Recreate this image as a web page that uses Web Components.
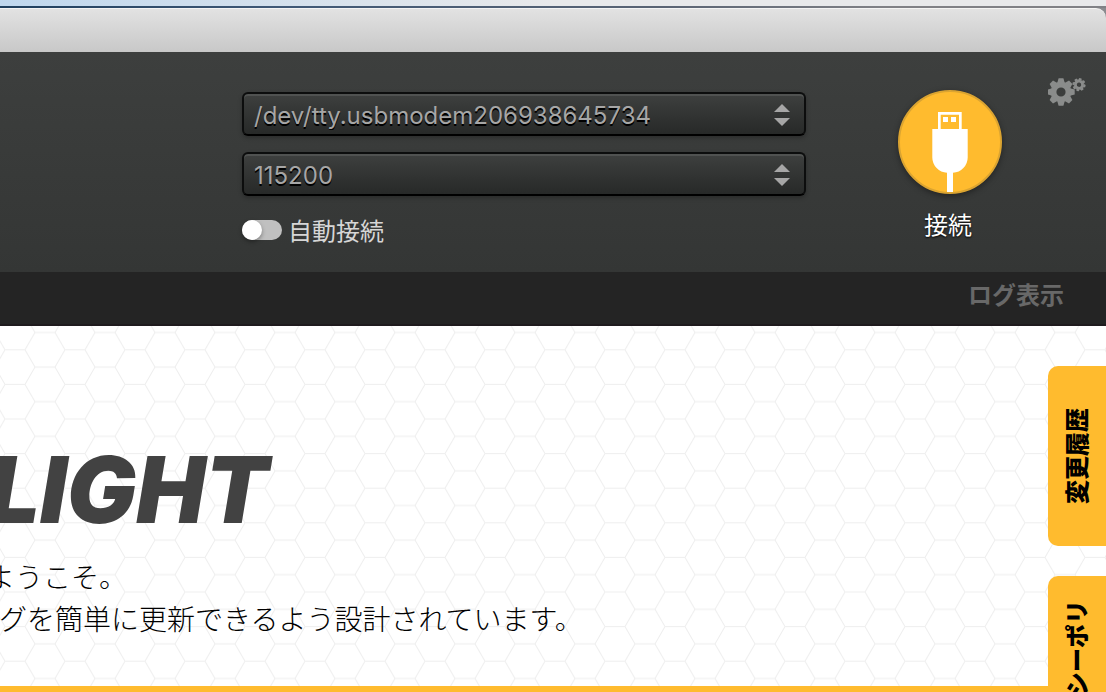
<!DOCTYPE html>
<html lang="ja">
<head>
<meta charset="utf-8">
<title>Configurator</title>
<style>
html, body { margin: 0; height: 100%; overflow: hidden; }
body { font-family: Inter, "Noto Sans CJK JP", sans-serif; background: #fff; --accent: #ffbb2e; }
</style>
</head>
<body>
<app-window>
  <window-titlebar></window-titlebar>
  <app-header>
    <port-picker></port-picker>
    <connect-button>接続</connect-button>
    <gear-button></gear-button>
  </app-header>
  <log-bar>ログ表示</log-bar>
  <landing-page>
    <brand-title slot="title">LIGHT</brand-title>
    <p slot="intro" class="welcome">ようこそ。</p>
    <p slot="intro" class="about">グを簡単に更新できるよう設計されています。</p>
    <side-tab slot="tabs">変更履歴</side-tab>
    <side-tab slot="tabs" long>シーポリ</side-tab>
  </landing-page>
</app-window>

<script>
function define(name, html) {
  const template = document.createElement('template');
  template.innerHTML = html;
  customElements.define(name, class extends HTMLElement {
    constructor() {
      super();
      this.attachShadow({ mode: 'open' }).append(template.content.cloneNode(true));
    }
  });
}

define('app-window', `
<style>
:host { display: flex; flex-direction: column; height: 100vh; overflow: hidden; }
</style>
<slot></slot>`);

define('window-titlebar', `
<style>
:host { display: block; flex: none; background: linear-gradient(90deg, #bfd7ee, #e8e9eb 50%); }
.edge { height: 2px; margin-top: 6px; background: linear-gradient(90deg, #1f3f5e, #3f5876 25%, #5a6474 60%, #808186 80%); }
.backing { background: #8a8b8f; }
.bar { height: 43px; border-top: 1px solid #f4f4f4; border-top-right-radius: 10px; background: linear-gradient(#e2e2e2, #c8c8c8); }
.top { display: flow-root; }
</style>
<div class="top"><div class="edge"></div></div>
<div class="backing"><div class="bar"></div></div>`);

define('app-header', `
<style>
:host { display: flex; flex: none; justify-content: flex-end; align-items: flex-start; box-sizing: border-box; height: 220px; padding-right: 20px; background: linear-gradient(#3d3f3e, #343635); }
</style>
<slot></slot>`);

define('combo-box', `
<style>
:host { display: grid; align-items: center; }
select, svg { grid-area: 1 / 1; }
select {
  appearance: none; box-sizing: border-box; width: 100%; height: 44px; margin: 0; padding: 2px 40px 0 10px;
  border: 2px solid #0c0d0d; border-bottom-color: #000; border-radius: 6px;
  background: linear-gradient(#3e403f, #272928);
  box-shadow: inset 0 2px 0 #505251, 0 2px 4px rgba(0,0,0,.25);
  font: 24px Inter, sans-serif; color: #a6a6a6; text-shadow: 0 2px 0 #000;
}
svg { justify-self: end; margin: 2px 16px 0 0; pointer-events: none; }
</style>
<select></select>
<svg width="16" height="22" fill="#a6a6a6" aria-hidden="true"><path d="M8 0l8 8H0zM8 22l8-8H0z"/></svg>`);

define('port-picker', `
<style>
:host { display: grid; gap: 16px; flex: 0 1 564px; margin: 40px 92px 0 0; }
label { display: flex; align-items: center; gap: 6px; height: 36px; font: 24px/36px "Noto Sans CJK JP", sans-serif; color: #d6d6d6; }
input { appearance: none; display: flex; width: 40px; height: 20px; margin: 0; border-radius: 10px; background: #c0c0c0; }
input::before { content: ""; width: 20px; height: 20px; border-radius: 50%; background: #fff; box-shadow: 0 2px 4px rgba(0,0,0,.35); }
input:checked { justify-content: flex-end; background: var(--accent); }
</style>
<combo-box id="port"></combo-box>
<combo-box id="baud"></combo-box>
<label><input type="checkbox">自動接続</label>`);

define('connect-button', `
<style>
:host { display: block; flex: none; width: 104px; margin: 38px 46px 0 0; }
button { display: block; width: 100%; margin: 0; padding: 0; border: 0; background: none; font: 24px/36px "Noto Sans CJK JP", sans-serif; color: #fff; text-shadow: 0 1px 2px #000; }
.disc { display: block; box-sizing: border-box; width: 104px; height: 104px; margin-bottom: 12px; border: 2px solid #dba431; border-radius: 50%; background: var(--accent); box-shadow: 0 2px 6px rgba(0,0,0,.4); }
svg { display: block; }
.name { display: block; margin-right: 4px; }
</style>
<button>
  <span class="disc"><svg width="100" height="100" viewBox="2 2 100 100" fill="#fff" aria-hidden="true">
    <path fill-rule="evenodd" d="M40 22h23.700v18H40zM42.700 24.700v15h18.300v-15z"/>
    <path d="M45 27h5v5h-5zM53 27h5v5h-5z"/>
    <path d="M34.300 39h35.400v28.500a15.500 15.500 0 0 1-14.700 15.300V102h-6V82.800a15.500 15.500 0 0 1-14.700-15.300z"/>
  </svg></span>
  <span class="name"><slot></slot></span>
</button>`);

define('gear-button', `
<style>
:host { display: block; flex: none; margin-top: 26px; }
button { display: block; margin: 0; padding: 0; border: 0; background: none; color: #8a8c8b; }
svg { display: block; }
</style>
<button aria-label="設定">
  <svg width="38" height="28" viewBox="0 0 38 28" fill="currentColor" aria-hidden="true">
    <defs>
      <g id="pair"><path d="M-3.800-9L-2.400-13.700H2.400L3.800-9z"/><path d="M-3.800 9L-2.400 13.700H2.400L3.800 9z"/></g>
      <g id="gear">
        <circle r="7.400" fill="none" stroke="currentColor" stroke-width="5.600"/>
        <use href="#pair"/><use href="#pair" transform="rotate(45)"/><use href="#pair" transform="rotate(90)"/><use href="#pair" transform="rotate(135)"/>
      </g>
    </defs>
    <use href="#gear" transform="translate(13 14)"/>
    <use href="#gear" transform="translate(31 6.700) rotate(12) scale(.48)"/>
  </svg>
</button>`);

define('log-bar', `
<style>
:host { display: flex; flex: none; justify-content: flex-end; box-sizing: border-box; height: 54px; padding: 4px 42px 0 0; border-bottom: 2px solid #1f1b1e; background: #242424; }
a { font: bold 24px/36px "Noto Sans CJK JP", sans-serif; color: #686868; text-decoration: none; }
</style>
<a href="#log"><slot></slot></a>`);

define('brand-title', `
<style>
:host { display: block; }
h1 { margin: 0 0 0 -12px; font: italic 900 92px/96px Inter, "Liberation Sans", sans-serif; color: #424242; white-space: nowrap; }
</style>
<h1><slot></slot></h1>`);

define('side-tab', `
<style>
:host { display: block; --tab-height: 180px; }
:host([long]) { --tab-height: 240px; }
button {
  display: flex; align-items: center; justify-content: center; box-sizing: border-box; width: 58px; height: var(--tab-height);
  margin: 0; padding: 0 2px 0 0; border: 0; border-radius: 10px 0 0 10px; background: var(--accent);
  font: 900 24px/36px "Noto Sans CJK JP", sans-serif; color: #000;
}
:host([long]) button { align-items: flex-start; padding-top: 24px; }
span { writing-mode: vertical-rl; text-orientation: sideways; transform: rotate(180deg); white-space: nowrap; }
</style>
<button><span><slot></slot></span></button>`);

define('landing-page', `
<style>
:host { display: grid; grid-template: minmax(0, 1fr) 6px / minmax(0, 1fr) auto; flex: 1; min-height: 0; background: #fff; }
.pattern { grid-area: 1 / 1 / 2 / 3; width: 100%; height: 100%; }
.copy { grid-area: 1 / 1; padding-top: 116px; }
.intro { margin-top: 17px; }
.rule { grid-area: 2 / 1 / 3 / 3; background: var(--accent); }
aside { grid-area: 1 / 2 / 3 / 3; display: flex; flex-direction: column; gap: 30px; padding-top: 40px; min-height: 0; }
.copy, aside { z-index: 1; }
::slotted(p) { margin: 0; font: 300 28px/42px "Noto Sans CJK JP", sans-serif; color: #000; white-space: nowrap; }
::slotted(.welcome) { margin-left: -13px; }
::slotted(.about) { margin-left: -1px; }
</style>
<svg class="pattern" aria-hidden="true">
  <defs><pattern id="hex" width="60" height="34.600" x="5" y="6.500" patternUnits="userSpaceOnUse">
    <path d="M30 0H50L60 17.300L50 34.600H30L20 17.300zM0 17.300H20" fill="none" stroke="#eeeeee" stroke-width="1"/>
  </pattern></defs>
  <rect width="100%" height="100%" fill="url(#hex)"/>
</svg>
<div class="copy"><slot name="title"></slot><div class="intro"><slot name="intro"></slot></div></div>
<div class="rule"></div>
<aside><slot name="tabs"></slot></aside>`);

const picker = document.querySelector('port-picker').shadowRoot;
function fill(id, label, values) {
  const select = picker.getElementById(id).shadowRoot.querySelector('select');
  select.setAttribute('aria-label', label);
  values.forEach(value => select.add(new Option(value)));
}
fill('port', 'ポート', ['/dev/tty.usbmodem206938645734']);
fill('baud', 'ボーレート', ['115200']);
</script>
</body>
</html>
